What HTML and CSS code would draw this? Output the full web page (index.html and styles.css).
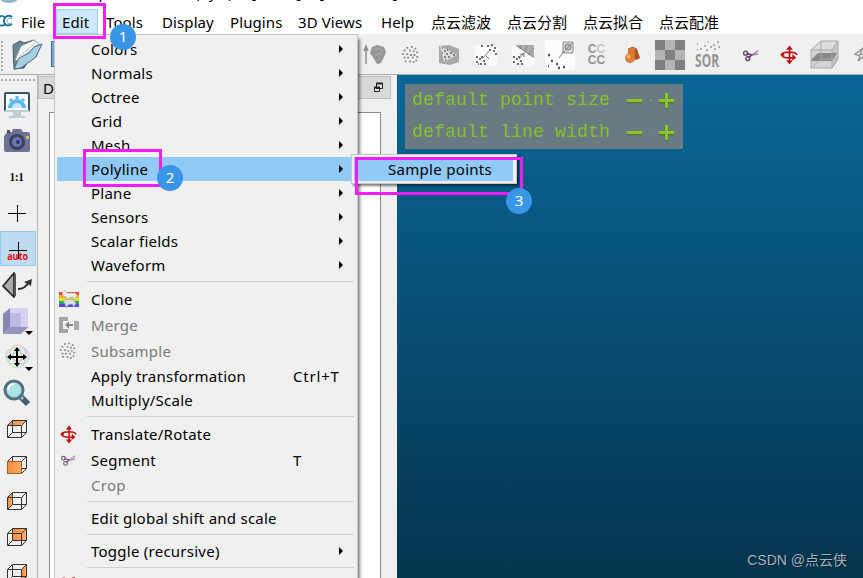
FILE: index.html
```html
<!DOCTYPE html>
<html lang="en">
<head>
    <meta charset="UTF-8">
    <meta name="viewport" content="width=device-width, initial-scale=1.0">
    <title>CloudCompare</title>
    <link rel="stylesheet" href="styles.css">
</head>
<body>
    <!-- shared icons -->
    <svg class="defs" width="0" height="0">
        <symbol id="dots" viewBox="0 0 20 20">
            <path d="M6 2h2M11 1h2M15 3h2M3 5h2M9 5h2M13 6h2M17 7h2M1 9h2M6 9h2M10 10h2M14 10h2M3 13h2M7 13h2M12 13h2M17 12h2M4 17h2M9 17h2M13 18h2M16 16h2" stroke="currentColor" stroke-width="2"/>
        </symbol>
        <symbol id="rotate" viewBox="0 0 20 20">
            <path d="M10 3v14M10 7c-5 0-8 1-8 3s3 3 8 3h5M10 7c4 0 7 1 8 3" fill="none" stroke="#bd0c12" stroke-width="1.7"/>
            <path d="M10 0l3.5 4.5h-7zM10 20l3.5-4.5h-7zM13 9l4 4-4 3zM0 10l3-3 2 4z" fill="#bd0c12"/>
        </symbol>
        <symbol id="scissors" viewBox="0 0 20 16">
            <path d="M6 7l5 1 7-5M8 10l3-2 7-1" fill="none" stroke="#a77eae" stroke-width="1.7"/>
            <path d="M5 6l6 2-4 3" fill="none" stroke="#5b3f62" stroke-width="1.4"/>
            <circle cx="4" cy="6" r="2.2" fill="none" stroke="#513a5a" stroke-width="1.4"/>
            <circle cx="6.5" cy="12" r="2.2" fill="none" stroke="#513a5a" stroke-width="1.4"/>
        </symbol>
        <symbol id="wire" viewBox="0 0 20 18">
            <path d="M.5 5.500h14v12h-14zM5.500.5h14v12h-5M.5 5.500l5-5M14.500 5.500l5-5M14.500 17.500l5-5M5.500 .5v12h9M.5 17.500l5-5" fill="none" stroke="#333" stroke-width="1"/>
        </symbol>
        <linearGradient id="orange"><stop offset="0" stop-color="#f98b3c"/><stop offset="1" stop-color="#ffad6c"/></linearGradient>
    </svg>

    <header class="titlebar">
        <svg class="title-logo" width="18" height="4"><ellipse cx="9" cy="0" rx="8" ry="3" fill="#8fb8d0"/></svg>
        <span class="title-name">CloudCompare</span>
        <span class="title-version">v2.12.0</span>
        <span class="title-code">(Kyiv)</span>
        <span class="title-arch">[64-bit]</span>
        <span class="title-sep">-</span>
        <span class="title-view">[3D View 1]</span>
    </header>

    <nav class="menubar">
        <svg class="logo" width="13" height="14" viewBox="0 0 13 14" fill="none" stroke="#19719f" stroke-width="1.8">
            <path d="M5 3.500C1 0-2 3-2 7s3 6 7 3.500M12 3C8 0 4 3 4 7s4 6 8 3"/>
            <path d="M12 5C9 3 7 5 7 7s2 4 5 2" stroke="#5ba5c6" stroke-width="1"/>
        </svg>
        <span class="menu-name m-file">File</span>
        <span class="menu-name m-edit">Edit</span>
        <span class="menu-name m-tools">Tools</span>
        <span class="menu-name m-display">Display</span>
        <span class="menu-name m-plugins">Plugins</span>
        <span class="menu-name m-views">3D Views</span>
        <span class="menu-name m-help">Help</span>
        <span class="menu-name m-cn">点云滤波</span>
        <span class="menu-name m-cn">点云分割</span>
        <span class="menu-name m-cn">点云拟合</span>
        <span class="menu-name m-cn">点云配准</span>
    </nav>

    <div class="toolbar">
        <div class="toolbar-left">
            <svg width="6" height="32"><path d="M2 2v30" stroke="#aaa" stroke-width="2" stroke-dasharray="2 2"/></svg>
            <svg class="folder" width="32" height="32" viewBox="0 0 32 32">
                <path d="M2 6l7-4 4 2 10-3 4 4-14 24-10 1z" fill="#6b8796" stroke="#45535b"/>
                <path d="M4 21L10 7l13-6 5 4L13 25z" fill="#f6f6f6" stroke="#999"/>
                <path d="M9 17L24 4M9 20L26 6" stroke="#bbb"/>
                <path d="M3 30l5-11 10-5 5-6 8-3-6 13-15 11z" fill="#a9cfe2" stroke="#4c6a79"/>
            </svg>
            <svg class="save" width="10" height="32"><rect x="2.500" y="2.500" width="14" height="25" fill="#77a9df" stroke="#467"/></svg>
        </div>
        <div class="tool"><svg width="24" height="22" viewBox="0 0 24 22"><path d="M3 20V4M1 7l2-5 2 5" stroke="#8d8d8d" stroke-width="1.500" fill="none"/><path d="M9 3l5-2 7 2 2 5-3 7-2 4-4 1-3-5-4-6z" fill="#969696"/><path d="M10 6l5-2 5 3M12 12l5-3 3 4M14 17l3-4" stroke="#b0b0b0" fill="none"/></svg></div>
        <div class="tool gray shift"><svg width="18" height="20"><use href="#dots" width="18" height="20"/></svg></div>
        <div class="tool"><svg width="22" height="22" viewBox="0 0 22 22"><path d="M1 2l10-1 10 4v13l-9 3-11-2z" fill="#a8a8a8"/><path d="M2 2l17 9-13 7z" fill="#ddd"/><path d="M4 4h1M6 7h2M9 6h1M8 10h2M12 9h2M15 11h2M6 13h2M10 13h2M7 16h1M4 9h1" stroke="#666" stroke-width="1.600"/></svg></div>
        <div class="tool"><svg width="22" height="22" viewBox="0 0 22 22"><path d="M0 1h22v21H0z" fill="#fafafa"/><path d="M6 2h2M12 2h2M16 1h2M19 4h2M14 6h2M18 7h2M20 10h2M1 13h2M4 15h2M1 18h2M5 20h2M8 17h2M3 20h1M9 20h2M6 13h2" stroke="#6e6e6e" stroke-width="2"/><path d="M7 15l8-9M11 12l3 3" stroke="#777"/></svg></div>
        <div class="tool"><svg width="22" height="22" viewBox="0 0 22 22"><path d="M0 1h22v21H0z" fill="#fafafa"/><path d="M3 1h19v13z" fill="#ababab"/><path d="M5 2l16 11M9 1l-1 4M15 1l-2 8M22 4l-6 7" stroke="#888"/><path d="M1 13h2M4 15h2M1 18h2M5 20h2M8 17h2M9 20h2M6 13h2" stroke="#6e6e6e" stroke-width="2"/><path d="M7 15l5-6M8 11l4-2v4" stroke="#777" fill="none"/></svg></div>
        <div class="tool"><svg width="30" height="30" viewBox="0 0 30 30"><path d="M0 0h30v30H0z" fill="#fcfcfc"/><path d="M18 2h10v11H18z" fill="#ddd" stroke="#888"/><circle cx="23" cy="7" r="3" fill="#bbb" stroke="#777"/><path d="M18 13l10-11M14 18l5-7" stroke="#888"/><path d="M3 15h2M6 21h2M3 26h1M11 24h2M13 28h2M18 27h2" stroke="#555" stroke-width="2.500"/></svg></div>
        <div class="tool cc"><b>C<i>C</i></b><b>CC</b></div>
        <div class="tool shift"><svg width="16" height="18" viewBox="0 0 16 18"><path d="M4 3q5-4 9 0l3 9-4 2-7-2z" fill="#ae551f"/><path d="M4 2h7v7H4z" fill="#d97832"/><circle cx="6" cy="12" r="5" fill="#dd7b31"/><circle cx="4.500" cy="10.500" r="2" fill="#f7b16f"/></svg></div>
        <div class="tool nudge"><svg width="30" height="30" viewBox="0 0 30 30"><path d="M0 0h30v30H0z" fill="#b4b4b4"/><path d="M0 0h10v10H0zM20 0h10v10H20zM10 10h10v10H10zM0 20h10v10H0zM20 20h10v10H20z" fill="#808080"/></svg></div>
        <div class="tool sor">
            <svg width="24" height="11"><path d="M1 3h1M4 8h2M8 5h2M12 1h1M14 6h2M18 8h2M17 4h2M21 1h2M22 6h2M10 9h2M1 9h1" stroke="#999" stroke-width="1.500"/></svg>
            <b>SOR</b>
        </div>
        <div class="toolbar-line"></div>
        <div class="tool"><svg width="18" height="16"><use href="#scissors" width="18" height="16"/></svg></div>
        <div class="tool right"><svg width="19" height="20"><use href="#rotate" width="19" height="20"/></svg></div>
        <div class="tool"><svg width="29" height="29" viewBox="0 0 29 29"><path d="M1 10L11 1h17L22 10z" fill="#ddd"/><path d="M22 10l6-9v19l-6 8z" fill="#c7c7c7"/><path d="M1 10h21v18H1z" fill="#d4d4d4"/><path d="M1 20l7-7h19l-5 8H1z" fill="#888"/><path d="M1 10h21v18H1zL11 1h17v18l-6 9M22 10l6-9M11 1v18h17M1 28l10-9" fill="none" stroke="#aaa"/></svg></div>
        <div class="tool right"><svg width="20" height="20" viewBox="0 0 20 20"><path d="M1 9l8-6-3 6 5 1-7 6 2-5z" fill="none" stroke="#999" stroke-width="1.500"/></svg></div>
    </div>

    <div class="main">
        <aside class="sidebar">
            <svg class="grip" width="36" height="4"><path d="M1 2h34" stroke="#aaa" stroke-width="2" stroke-dasharray="2 2"/></svg>
            <div class="side-tool"><svg width="26" height="26" viewBox="0 0 26 26"><rect x="1" y="1" width="24" height="18" rx="1" fill="#f8fbfc" stroke="#3b5266" stroke-width="2"/><path d="M4 16a9 9 0 0 1 18 0z" fill="#5db9ea"/><path d="M8 16a5 5 0 0 1 10 0z" fill="#cceafa"/><path d="M6 7l2 2M13 4v3M20 7l-2 2" stroke="#5db9ea" stroke-width="3"/><path d="M1 18h24v2H1zM9 20h8v4H9zM5 24h16v2H5z" fill="#c2cdd3"/></svg></div>
            <div class="side-tool"><svg width="26" height="24" viewBox="0 0 26 24"><path d="M2 5q0-2 2-2h4l1-3h8l2 3h5q2 0 2 2v16q0 2-2 2H2q-2 0-2-2V7z" fill="#6b7396"/><path d="M3 1h3v3H3z" fill="#495069"/><circle cx="13" cy="13" r="8" fill="#3c4160"/><circle cx="13" cy="13" r="5" fill="#6578b5"/><circle cx="14" cy="13" r="2" fill="#372f62"/><path d="M22 7h3v3h-3z" fill="#f0bf3d"/></svg></div>
            <div class="side-tool one"><span>1:1</span></div>
            <div class="side-tool cross"><svg width="18" height="18"><path d="M9.500 0v17M0 8.500h18" stroke="#000"/></svg></div>
            <div class="side-tool auto">
                <svg width="18" height="18"><path d="M9.500 0v17M0 8.500h18" stroke="#000"/></svg>
                <b>auto</b>
            </div>
            <div class="side-tool"><svg width="30" height="26" viewBox="0 0 30 26"><path d="M1 14L12 1v24z" fill="#aaa" stroke="#222" stroke-width="1.600"/><path d="M12 1l2 1v22l-2 1z" fill="#555"/><path d="M16 17q7 0 10-6" fill="none" stroke="#222" stroke-width="1.800"/><path d="M22 10l8-3-1 7z" fill="#333"/></svg></div>
            <div class="side-tool"><svg width="32" height="28" viewBox="0 0 32 28"><path d="M2 7l7-6h18v20l-7 6H2z" fill="#d5d3f5"/><path d="M2 7l7-6v19l-7 7z" fill="#8786b0"/><path d="M9 20h18l-7 7H2z" fill="#9695c0"/><path d="M9 6h11v14H9z" fill="#bdbae7"/><path d="M24 24h8l-4 4z" fill="#000"/></svg></div>
            <div class="side-tool"><svg width="32" height="28" viewBox="0 0 32 28"><g fill="none" stroke-width="1.200"><circle cx="17" cy="10" r="8" stroke="#f0b5b5"/><circle cx="13" cy="13" r="8" stroke="#afdcc0"/><circle cx="20" cy="13" r="8" stroke="#b6cdef"/><circle cx="16" cy="17" r="8" stroke="#b3e6c5"/></g><path d="M16 6v16M8 14h16" stroke="#000" stroke-width="2"/><path d="M16 4l3 4h-6zM16 24l3-4h-6zM6 14l4-3v6zM26 14l-4-3v6z"/><path d="M24 24h8l-4 4z"/></svg></div>
            <div class="side-tool"><svg width="28" height="28" viewBox="0 0 28 28"><path d="M17 17l8 8" stroke="#405f73" stroke-width="6"/><path d="M16 16l4 4" stroke="#b5c1c7" stroke-width="3"/><circle cx="11" cy="11" r="9" fill="#ace3e7" stroke="#547084" stroke-width="3"/><path d="M5 11a6 6 0 0 1 6-6" stroke="#fff" fill="none" stroke-width="2"/></svg></div>
            <div class="side-tool"><svg width="20" height="18"><path d="M1 5l5-4h13l-5 4z" fill="url(#orange)"/><use href="#wire" width="20" height="18"/></svg></div>
            <div class="side-tool"><svg width="20" height="18"><use href="#wire" width="20" height="18"/><path d="M.5 5.500h14v12h-14z" fill="url(#orange)" stroke="#a55b2d"/></svg></div>
            <div class="side-tool"><svg width="20" height="18"><path d="M1 5l4-4v12l-4 4z" fill="url(#orange)"/><use href="#wire" width="20" height="18"/></svg></div>
            <div class="side-tool"><svg width="20" height="18"><path d="M5 1h14v12H5z" fill="url(#orange)"/><use href="#wire" width="20" height="18"/></svg></div>
            <div class="side-tool"><svg width="20" height="18"><path d="M15 5l4-4v12l-4 4z" fill="url(#orange)"/><use href="#wire" width="20" height="18"/></svg></div>
        </aside>

        <section class="db">
            <div class="db-title">
                <span>DB Tree</span>
                <svg width="11" height="11"><path d="M3.500 1.500h6v5h-6zM1.500 5.500h5v4h-5z" fill="#e5e5e5" stroke="#222"/><path d="M3 1.500h7M1 5.500h6" stroke="#222" stroke-width="2"/></svg>
            </div>
            <div class="db-tree"></div>
        </section>

        <section class="view">
            <div class="hot-zone">
                <div class="hot-row"><span>default point size</span><svg width="50" height="18"><path d="M1 10.500h15M33 10.500h15M40.500 3v15" stroke="#54703a" stroke-width="4"/><path d="M1 9.500h15M33 9.500h15M40.500 2v15" stroke="#88c425" stroke-width="3"/><path d="M24 9h2v1h-2z" fill="#88c425"/></svg></div>
                <div class="hot-row"><span>default line width</span><svg width="50" height="18"><path d="M1 10.500h15M33 10.500h15M40.500 3v15" stroke="#54703a" stroke-width="4"/><path d="M1 9.500h15M33 9.500h15M40.500 2v15" stroke="#88c425" stroke-width="3"/><path d="M24 9h1v1h-1z" fill="#88c425"/></svg></div>
            </div>
            <div class="watermark">CSDN @点云侠</div>
        </section>
    </div>

    <div class="dropdown">
        <div class="item sub"><span>Colors</span></div>
        <div class="item sub"><span>Normals</span></div>
        <div class="item sub"><span>Octree</span></div>
        <div class="item sub"><span>Grid</span></div>
        <div class="item sub"><span>Mesh</span></div>
        <div class="item sub active"><span>Polyline</span></div>
        <div class="item sub"><span>Plane</span></div>
        <div class="item sub"><span>Sensors</span></div>
        <div class="item sub"><span>Scalar fields</span></div>
        <div class="item sub"><span>Waveform</span></div>
        <hr>
        <div class="item tall">
            <svg class="icon" width="20" height="18" viewBox="0 0 20 18"><path d="M0 2h20v3H0z" fill="#f0452d"/><path d="M0 5h20v3H0z" fill="#ffa928"/><path d="M0 8h20v3H0z" fill="#d8e72c"/><path d="M0 11h20v3H0z" fill="#24a954"/><path d="M0 14h20v3H0z" fill="#5548ef"/><path d="M3 3l3-3 2 3h8l2 2-2 5-2-3-4 1-1 3-2-4-3-1z" fill="#eee" stroke="#999" stroke-width=".5"/><path d="M4 11l3-2 8 1 2 3-2 4-2-3-4 1-2 3-1-4z" fill="#ddd" stroke="#888" stroke-width=".5"/></svg>
            <span>Clone</span>
        </div>
        <div class="item tall disabled">
            <svg class="icon" width="20" height="16" viewBox="0 0 20 16"><path d="M0 0h9v4H4v8h5v4H0z" fill="#a4a4a4"/><path d="M15 4h5v9h-5z" fill="#aaa"/><path d="M6 8l4-4v3h4v2h-4v3z" fill="#858585"/></svg>
            <span>Merge</span>
        </div>
        <div class="item tall disabled"><svg class="icon gray" width="17" height="18"><use href="#dots" width="17" height="18"/></svg><span>Subsample</span></div>
        <div class="item"><span>Apply transformation</span><kbd>Ctrl+T</kbd></div>
        <div class="item"><span>Multiply/Scale</span></div>
        <hr>
        <div class="item tall"><svg class="icon rot" width="18" height="19"><use href="#rotate" width="18" height="19"/></svg><span>Translate/Rotate</span></div>
        <div class="item tall"><svg class="icon rot pale" width="17" height="14"><use href="#scissors" width="17" height="14"/></svg><span>Segment</span><kbd>T</kbd></div>
        <div class="item disabled"><span>Crop</span></div>
        <hr>
        <div class="item"><span>Edit global shift and scale</span></div>
        <hr>
        <div class="item sub"><span>Toggle (recursive)</span></div>
        <hr>
        <div class="item tall"><svg class="icon" width="20" height="16"><path d="M2 2l4-1M13 1h3" stroke="#d76060" stroke-width="2"/></svg></div>
    </div>

    <div class="submenu"><div>Sample points</div></div>

    <div class="mark mark-1"></div>
    <div class="mark mark-2"></div>
    <div class="mark mark-3"></div>
    <div class="badge badge-1">1</div>
    <div class="badge badge-2">2</div>
    <div class="badge badge-3">3</div>
</body>
</html>
```

FILE: styles.css
```css
* {
    box-sizing: border-box;
}

body {
    margin: 0;
    width: 863px;
    height: 578px;
    overflow: hidden;
    position: relative;
    background-color: #f0f0f0;
    color: #000;
    font-family: "Noto Sans", "Noto Sans CJK SC", sans-serif;
    font-size: 15px;
}

svg {
    display: block;
    flex: none;
}

.defs {
    position: absolute;
}

/* title and menu bar */
.titlebar {
    height: 8px;
    display: flex;
    align-items: flex-end;
    background-color: #fff;
    line-height: 20px;
    white-space: nowrap;
    overflow: hidden;
    padding-bottom: 6px;
}

.titlebar span {
    flex: none;
}

.title-logo {
    align-self: flex-start;
}

.title-name { width: 121px; padding-left: 7px; }
.title-version { width: 56px; }
.title-code { width: 56px; }
.title-arch { width: 57px; }
.title-sep { width: 11px; }

.menubar {
    height: 27px;
    display: flex;
    background-color: #fff;
    border-bottom: 1px solid #ededed;
    white-space: nowrap;
}

.logo {
    margin-top: 6px;
}

.menu-name {
    line-height: 28px;
    flex: none;
    letter-spacing: .1px;
}

.m-file { width: 43px; padding-left: 8px; }

.m-edit {
    width: 42px;
    height: 25px;
    margin-top: 1px;
    padding-left: 5px;
    line-height: 25px;
    background-color: #cce8ff;
    border: 1px solid #99d1ff;
}

.m-tools { width: 64px; padding-left: 8px; }
.m-display { width: 68px; }
.m-plugins { width: 68px; }
.m-views { width: 83px; }
.m-help { width: 50px; }
.m-cn { width: 76px; letter-spacing: 0; }

/* toolbar */
.toolbar {
    height: 40px;
    display: flex;
    background-color: #f0f0f0;
    border-bottom: 1px solid #aaa;
    overflow: hidden;
}

.toolbar-left {
    width: 356px;
    flex: none;
    display: flex;
    align-items: center;
}

.folder {
    margin-left: 5px;
}

.save {
    margin-left: 6px;
}

.tool {
    width: 37px;
    flex: none;
    display: flex;
    align-items: center;
    justify-content: center;
}

.shift {
    padding-right: 3px;
}

.nudge {
    padding-right: 1px;
}

.right {
    padding-left: 4px;
}

.gray {
    color: #858585;
}

.cc {
    flex-direction: column;
    font: bold 12px/11px "Liberation Sans", sans-serif;
    color: #929292;
}

.cc i {
    font-style: normal;
    color: #c4c4c4;
}

.sor {
    flex-direction: column;
    color: #929292;
}

.sor b {
    font: bold 17px/17px "Open Sans", sans-serif;
    transform: scaleX(.7);
}

.toolbar-line {
    width: 1px;
    margin: 4px 3px;
    background-color: #c8c8c8;
}

/* main area */
.main {
    display: flex;
    height: 503px;
    overflow: hidden;
}

.sidebar {
    width: 38px;
    flex: none;
    border-right: 1px solid #b4b4b4;
}

.grip {
    margin: 3px 0 5px;
}

.side-tool {
    width: 36px;
    height: 36px;
    display: flex;
    align-items: center;
    justify-content: center;
    padding-right: 2px;
}

.one {
    font: bold 13px "Liberation Serif", serif;
}

.one span {
    transform: scaleX(.8);
}

.cross {
    padding-top: 2px;
}

.auto {
    flex-direction: column;
    height: 35px;
    margin-bottom: 1px;
    padding: 6px 0 0;
    background-color: #c0dcf3;
    border: 1px solid #90c8f6;
}

.auto b {
    font: bold 10px/10px "Open Sans", sans-serif;
    color: #f00a0a;
    margin-top: -9px;
    transform: scaleX(.9);
}

.db {
    width: 359px;
    flex: none;
    padding: 1px 6px 0 0;
}

.db-title {
    height: 23px;
    padding: 0 6px 0 4px;
    display: flex;
    justify-content: space-between;
    align-items: center;
    background-color: #d9d9d9;
    border: 1px solid #bdbdbd;
}

.db-tree {
    height: 480px;
    margin: 13px 10px 0 11px;
    background-color: #fff;
    border: 1px solid #828790;
}

.view {
    flex: 1;
    display: flex;
    flex-direction: column;
    justify-content: space-between;
    padding: 9px 16px 7px 8px;
    background: linear-gradient(#0a6697, #05344d);
}

.hot-zone {
    width: 278px;
    height: 65px;
    padding-left: 7px;
    background-color: #6a7a82;
}

.hot-row {
    height: 32px;
    display: flex;
    align-items: center;
    font: 18px "Liberation Mono", monospace;
    letter-spacing: .2px;
    color: #84c127;
    white-space: nowrap;
}

.hot-row span {
    width: 214px;
}

.watermark {
    align-self: flex-end;
    font: 14px/22px "Liberation Sans", "Noto Sans CJK SC", sans-serif;
    color: #a7b4bc;
    text-shadow: 1px 1px 1px #031f2e;
}

/* edit menu */
.dropdown {
    position: absolute;
    left: 54px;
    top: 34px;
    width: 304px;
    height: 560px;
    padding: 2px;
    letter-spacing: .25px;
    background-color: #f0f0f0;
    border: 1px solid #c6c6c6;
    box-shadow: 3px 4px 3px -1px rgba(0, 0, 0, .5);
}

.item {
    height: 24px;
    display: flex;
    align-items: center;
    padding-left: 34px;
    position: relative;
    white-space: nowrap;
}

.tall {
    height: 26px;
}

.disabled {
    color: #787878;
}

.active {
    background-color: #91c9f7;
}

.sub::after {
    content: "";
    margin-left: auto;
    margin-right: 12px;
    border: 4px solid transparent;
    border-left-color: #000;
    border-right-width: 0;
}

.icon {
    margin-left: -32px;
    margin-right: auto;
}

.icon + span {
    position: absolute;
    left: 34px;
}

.rot {
    margin-left: -31px;
}

.pale {
    opacity: .8;
}

.item kbd {
    position: absolute;
    left: 236px;
    font: inherit;
    letter-spacing: .8px;
}

.dropdown hr {
    height: 1px;
    margin: 4px 1px 4px 30px;
    border: 0;
    background-color: #d0d0d0;
}

.submenu {
    position: absolute;
    left: 351px;
    top: 154px;
    width: 166px;
    height: 30px;
    padding: 2px;
    background-color: #f0f0f0;
    border: 1px solid #c6c6c6;
    box-shadow: 2px 2px 2px rgba(0, 0, 0, .5);
}

.submenu div {
    height: 24px;
    margin-right: 1px;
    padding-left: 34px;
    line-height: 25px;
    letter-spacing: .3px;
    background-color: #91c9f7;
}

/* numbered steps */
.mark {
    position: absolute;
    border: 3px solid #f41cf4;
}

.mark-1 { left: 53px; top: 3px; width: 53px; height: 36px; }
.mark-2 { left: 83px; top: 149px; width: 79px; height: 38px; }
.mark-3 { left: 355px; top: 157px; width: 168px; height: 38px; }

.badge {
    position: absolute;
    width: 26px;
    height: 26px;
    border-radius: 50%;
    background-color: #3996e6;
    color: #fff;
    line-height: 25px;
    text-align: center;
}

.badge-1 { left: 110px; top: 24px; }
.badge-2 { left: 157px; top: 165px; }
.badge-3 { left: 506px; top: 188px; }
```
